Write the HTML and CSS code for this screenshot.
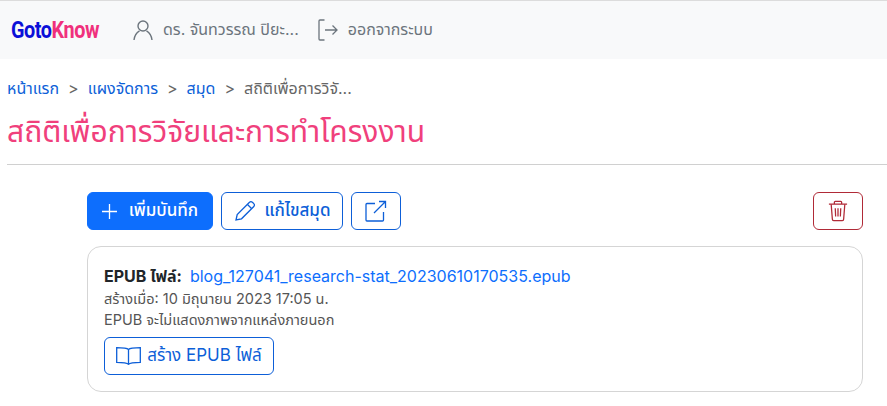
FILE: index.html
```html
<!DOCTYPE html>
<html lang="th">
<head>
    <meta charset="UTF-8">
    <meta name="viewport" content="width=device-width, initial-scale=1.0">
    <title>GotoKnow</title>
    <link rel="stylesheet" href="styles.css">
</head>
<body>
    <!-- Navbar -->
    <nav class="navbar">
        <a class="brand" href="#"><span class="brand-goto">Goto</span><span class="brand-know">Know</span></a>
        <a class="nav-link nav-user" href="#">
            <svg width="20" height="22" viewBox="0 0 20 22" fill="none" stroke="currentColor" stroke-width="1.4"><circle cx="10" cy="7" r="5"/><path d="M1 21c.5-4.500 2.500-7.500 5.500-9.200M19 21c-.5-4.500-2.500-7.500-5.500-9.200"/></svg>
            <span>ดร. จันทวรรณ ปิยะ...</span>
        </a>
        <a class="nav-link" href="#">
            <svg width="20" height="22" viewBox="0 0 20 22" fill="none" stroke="currentColor" stroke-width="1.3"><path d="M6.500 1H2a1 1 0 0 0-1 1v18a1 1 0 0 0 1 1h4.500"/><path d="M7 11h12M14.500 6.500L19 11l-4.500 4.500"/></svg>
            <span>ออกจากระบบ</span>
        </a>
    </nav>

    <div class="breadcrumb">
        <a href="#">หน้าแรก</a><span class="sep">&gt;</span><a href="#">แผงจัดการ</a><span class="sep">&gt;</span><a href="#">สมุด</a><span class="sep">&gt;</span><span>สถิติเพื่อการวิจั...</span>
    </div>

    <h1 class="title">สถิติเพื่อการวิจัยและการทำโครงงาน</h1>
    <hr class="divider">

    <div class="content">
        <div class="toolbar">
            <a class="btn btn-primary" href="#">
                <svg width="15" height="15" viewBox="0 0 15 15" fill="none" stroke="currentColor" stroke-width="1.300"><path d="M7.500 0v15M0 7.500h15"/></svg>
                <span>เพิ่มบันทึก</span>
            </a>
            <a class="btn btn-outline btn-edit" href="#">
                <svg width="22" height="22" viewBox="0 0 22 22" fill="none" stroke="currentColor" stroke-width="1.3"><path d="M15.500 2.200a2 2 0 0 1 2.900 0l1.400 1.400a2 2 0 0 1 0 2.900L7.500 18.800 2 20l1.200-5.500z"/><path d="M13.500 4.500l4 4"/></svg>
                <span>แก้ไขสมุด</span>
            </a>
            <a class="btn btn-outline btn-icon" href="#">
                <svg width="22" height="22" viewBox="0 0 22 22" fill="none" stroke="currentColor" stroke-width="1.3"><path d="M10 3.500H2a1 1 0 0 0-1 1V20a1 1 0 0 0 1 1h15.500a1 1 0 0 0 1-1v-8"/><path d="M9 13L20.500 1.500M14 1.500h6.500V8"/></svg>
            </a>
            <a class="btn btn-danger btn-icon" href="#">
                <svg width="20" height="22" viewBox="0 0 22 24" fill="none" stroke="currentColor" stroke-width="1.4"><path d="M1 4.500h20M7 4.500V2.500a1 1 0 0 1 1-1h6a1 1 0 0 1 1 1v2"/><path d="M3.500 4.500l1.300 16.500a1.500 1.500 0 0 0 1.500 1.500h9.400a1.500 1.500 0 0 0 1.500-1.500l1.300-16.500"/><path d="M8 9l.4 9M11 9v9M14 9l-.4 9"/></svg>
            </a>
        </div>

        <div class="card">
            <div class="epub-row"><b>EPUB ไฟล์:</b><a href="#">blog_127041_research-stat_20230610170535.epub</a></div>
            <div class="meta">สร้างเมื่อ: 10 มิถุนายน 2023 17:05 น.</div>
            <div class="meta">EPUB จะไม่แสดงภาพจากแหล่งภายนอก</div>
            <a class="btn btn-outline btn-epub" href="#">
                <svg width="25" height="18" viewBox="0 0 25 18" fill="none" stroke="currentColor" stroke-width="1.3"><path d="M12.500 2.500C11 1 8.500.7.700.7v14.600c7.800 0 10.300.4 11.800 2 1.500-1.600 4-2 11.800-2V.7c-7.800 0-10.300.3-11.800 1.800zM12.500 2.500v14.800"/></svg>
                <span>สร้าง EPUB ไฟล์</span>
            </a>
        </div>
    </div>
</body>
</html>
```
FILE: styles.css
```css
body {
    font-family: "Inter", "Noto Sans Thai", "Noto Sans", sans-serif;
    margin: 0;
    background-color: white;
    color: #212529;
}
a {
    text-decoration: none;
    color: #0d6efd;
}
.navbar {
    display: flex;
    align-items: center;
    height: 58px;
    padding-left: 11px;
    background-color: #f8f9fa;
    border-top: 1px solid #dcdcdc;
}
.brand {
    font-family: "Roboto", sans-serif;
    font-size: 23px;
    font-weight: 700;
    width: 122px;
    letter-spacing: -0.5px;
    transform: scaleX(0.86);
    transform-origin: left center;
}
.brand-goto {
    color: #0b10d8;
}
.brand-know {
    color: #f0307c;
}
.nav-link {
    display: flex;
    align-items: center;
    gap: 10px;
    color: #6c757d;
    font-size: 16px;
}
.nav-user {
    margin-right: 19px;
}
.breadcrumb {
    padding: 18px 7px 0;
    font-size: 16px;
    line-height: 22px;
    color: #666;
}
.breadcrumb a {
    color: #0d5fd8;
}
.sep {
    margin: 0 9px;
}
.title {
    margin: 14px 7px 0;
    font-size: 30px;
    font-weight: 400;
    line-height: 36px;
    color: #f0407c;
}
.divider {
    margin: 15px 0 0 7px;
    border: none;
    border-top: 1px solid #d0d0d0;
}
.content {
    padding: 27px 24px 0 87px;
}
.toolbar {
    display: flex;
    gap: 8px;
}
.btn {
    display: inline-flex;
    align-items: center;
    justify-content: center;
    box-sizing: border-box;
    height: 38px;
    border-radius: 6px;
    font-size: 17px;
    font-weight: 500;
    border: 1px solid #0d5fd8;
}
.btn-primary {
    width: 126px;
    gap: 12px;
    background-color: #0d6efd;
    border-color: #0d6efd;
    color: white;
}
.btn-outline {
    gap: 9px;
    color: #0d5fd8;
}
.btn-edit {
    width: 122px;
}
.btn-icon {
    width: 50px;
}
.btn-danger {
    margin-left: auto;
    border-color: #b02a37;
    color: #b02a37;
}
.card {
    margin-top: 16px;
    padding: 17px 16px 16px;
    height: 146px;
    box-sizing: border-box;
    border: 1px solid #d5d5d5;
    border-radius: 14px;
}
.epub-row {
    display: flex;
    gap: 8px;
    font-size: 16px;
    line-height: 24px;
}
.meta {
    font-size: 14.5px;
    line-height: 21px;
    color: #555;
}
.btn-epub {
    margin-top: 7px;
    width: 170px;
    gap: 6px;
    font-weight: 400;
}
```
